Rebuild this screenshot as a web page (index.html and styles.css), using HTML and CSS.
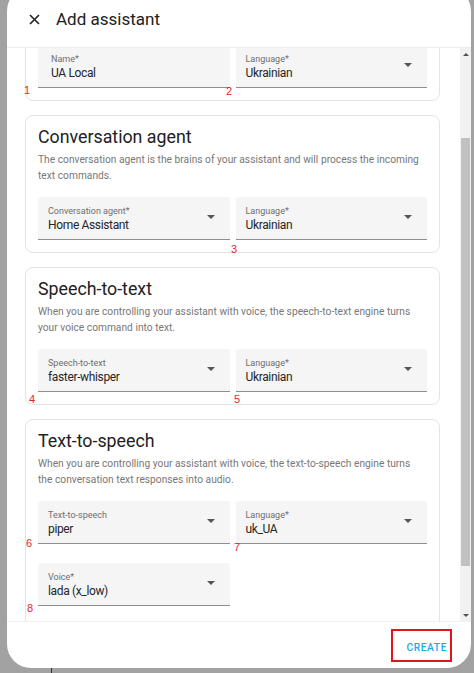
FILE: index.html
```html
<!DOCTYPE html>
<html lang="en">
<head>
<meta charset="utf-8">
<title>Add assistant</title>
<link rel="stylesheet" href="styles.css">
</head>
<body>
<div class="dialog">
  <header class="dlg-head">
    <button class="close" aria-label="Close">
      <svg width="11" height="11" viewBox="0 0 11 11"><path d="M1 1 L10 10 M10 1 L1 10" stroke="#212121" stroke-width="1.6" fill="none"/></svg>
    </button>
    <h2 class="dlg-title">Add assistant</h2>
  </header>
  <div class="dlg-body">
    <div class="scroll">
      <section class="card card-first">
        <div class="row">
          <div class="field field-text"><div class="txt"><span class="lbl">Name*</span><span class="val">UA Local</span></div></div>
          <div class="field"><div class="txt"><span class="lbl">Language*</span><span class="val">Ukrainian</span></div><span class="caret"></span></div>
        </div>
      </section>
      <section class="card">
        <h3 class="card-title">Conversation agent</h3>
        <p class="card-desc">The conversation agent is the brains of your assistant and will process the incoming text commands.</p>
        <div class="row">
          <div class="field"><div class="txt"><span class="lbl">Conversation agent*</span><span class="val">Home Assistant</span></div><span class="caret"></span></div>
          <div class="field"><div class="txt"><span class="lbl">Language*</span><span class="val">Ukrainian</span></div><span class="caret"></span></div>
        </div>
      </section>
      <section class="card">
        <h3 class="card-title">Speech-to-text</h3>
        <p class="card-desc">When you are controlling your assistant with voice, the speech-to-text engine turns your voice command into text.</p>
        <div class="row">
          <div class="field"><div class="txt"><span class="lbl">Speech-to-text</span><span class="val">faster-whisper</span></div><span class="caret"></span></div>
          <div class="field"><div class="txt"><span class="lbl">Language*</span><span class="val">Ukrainian</span></div><span class="caret"></span></div>
        </div>
      </section>
      <section class="card card-last">
        <h3 class="card-title">Text-to-speech</h3>
        <p class="card-desc">When you are controlling your assistant with voice, the text-to-speech engine turns the conversation text responses into audio.</p>
        <div class="row">
          <div class="field"><div class="txt"><span class="lbl">Text-to-speech</span><span class="val">piper</span></div><span class="caret"></span></div>
          <div class="field"><div class="txt"><span class="lbl">Language*</span><span class="val">uk_UA</span></div><span class="caret"></span></div>
        </div>
        <div class="row row-voice">
          <div class="field"><div class="txt"><span class="lbl">Voice*</span><span class="val">lada (x_low)</span></div><span class="caret"></span></div>
        </div>
      </section>
    </div>
    <div class="scrollbar">
      <span class="sb-btn"><span class="sb-up"></span></span>
      <div class="sb-track"><div class="sb-thumb"></div></div>
      <span class="sb-btn"><span class="sb-down"></span></span>
    </div>
  </div>
  <footer class="dlg-foot">
    <button class="create">CREATE</button>
  </footer>
</div>

<span class="mark m1">1</span>
<span class="mark m2">2</span>
<span class="mark m3">3</span>
<span class="mark m4">4</span>
<span class="mark m5">5</span>
<span class="mark m6">6</span>
<span class="mark m7">7</span>
<span class="mark m8">8</span>
<span class="redbox"></span>
<span class="tick"></span>
</body>
</html>
```

FILE: styles.css
```css
html {
  background: #a2a2a2;
}
body {
  margin: 0;
  font-family: Roboto, "Noto Sans", "Liberation Sans", sans-serif;
  color: #212121;
  position: relative;
  height: 673px;
  overflow: hidden;
}
.dialog {
  margin: -13px 0 0 7px;
  width: 464px;
  height: 681px;
  background: #fff;
  border-radius: 24px;
  display: flex;
  flex-direction: column;
  overflow: hidden;
}
.dlg-head {
  flex: none;
  height: 38px;
  padding: 13px 0 9px 22px;
  display: flex;
  align-items: center;
  gap: 16px;
  border-bottom: 1px solid #ececec;
}
.close {
  border: 0;
  background: none;
  padding: 0;
  width: 11px;
  height: 11px;
  display: flex;
}
.dlg-title {
  margin: 0;
  font-size: 17px;
  font-weight: 400;
  line-height: 22px;
  color: #212121;
}
.dlg-body {
  flex: none;
  height: 573px;
  display: flex;
}
.scroll {
  flex: 1;
  overflow: hidden;
  padding: 0 20px 0 18px;
  display: flex;
  flex-direction: column;
  gap: 14px;
}
.card {
  flex: none;
  border: 1px solid #e3e3e3;
  border-radius: 8px;
  padding: 0 12px 12px;
}
.card-first {
  margin-top: -16px;
  padding-top: 12px;
}
.card-last {
  padding-bottom: 40px;
}
.card-title {
  margin: 0;
  padding-top: 9px;
  font-size: 17.8px;
  font-weight: 400;
  line-height: 24px;
  color: #212121;
}
.card-desc {
  margin: 3px 0 0;
  font-size: 10.2px;
  line-height: 16px;
  letter-spacing: 0.02px;
  color: #777;
}
.row {
  margin-top: 13px;
  display: grid;
  grid-template-columns: 1fr 1fr;
  gap: 6px;
}
.card-first .row {
  margin-top: 0;
}
.row-voice {
  margin-top: 19px;
}
.field {
  box-sizing: border-box;
  height: 43px;
  background: #f5f5f5;
  border-radius: 3px 3px 0 0;
  border-bottom: 1px solid #8e8e8e;
  padding: 8px 0 0 10px;
  display: flex;
  justify-content: space-between;
  align-items: flex-start;
}
.field-text {
  padding-left: 13px;
}
.txt {
  display: flex;
  flex-direction: column;
}
.lbl {
  font-size: 9px;
  line-height: 12px;
  color: #6e6e6e;
}
.val {
  font-size: 12px;
  line-height: 16px;
  letter-spacing: -0.35px;
  color: #262626;
}
.caret {
  margin: 10px 15px 0 0;
  width: 0;
  height: 0;
  border-left: 4px solid transparent;
  border-right: 4px solid transparent;
  border-top: 4px solid #555;
}
.scrollbar {
  flex: none;
  width: 11px;
  background: #f1f1f1;
  display: flex;
  flex-direction: column;
}
.sb-btn {
  flex: none;
  height: 12px;
  display: flex;
  align-items: center;
  justify-content: center;
}
.sb-up {
  width: 0;
  height: 0;
  border-left: 3px solid transparent;
  border-right: 3px solid transparent;
  border-bottom: 3px solid #505050;
}
.sb-down {
  width: 0;
  height: 0;
  border-left: 3px solid transparent;
  border-right: 3px solid transparent;
  border-top: 3px solid #505050;
}
.sb-track {
  flex: 1;
  padding-top: 78px;
}
.sb-thumb {
  margin-left: 1px;
  width: 9px;
  height: 428px;
  background: #c1c1c1;
}
.dlg-foot {
  flex: none;
  height: 41px;
  padding: 5px 24px 0 0;
  border-top: 1px solid #f0f0f0;
  display: flex;
  justify-content: flex-end;
  align-items: center;
}
.create {
  border: 0;
  background: none;
  padding: 0;
  font-family: Roboto, "Liberation Sans", sans-serif;
  font-size: 10.2px;
  font-weight: 500;
  letter-spacing: 0.6px;
  color: #1fa6e8;
}
.mark {
  position: absolute;
  font-family: "Liberation Sans", Arial, sans-serif;
  font-size: 11px;
  line-height: 11px;
  color: #e5262c;
}
.m1 { left: 24px; top: 85px; }
.m2 { left: 226px; top: 86px; }
.m3 { left: 231px; top: 244px; }
.m4 { left: 29px; top: 394px; }
.m5 { left: 234px; top: 394px; }
.m6 { left: 26px; top: 538px; }
.m7 { left: 234px; top: 542px; }
.m8 { left: 27px; top: 603px; }
.redbox {
  position: absolute;
  left: 391px;
  top: 629px;
  width: 57px;
  height: 29px;
  border: 2px solid #e0141c;
}
.tick {
  position: absolute;
  left: 51px;
  top: 668px;
  width: 1px;
  height: 5px;
  background: #333;
}
```
